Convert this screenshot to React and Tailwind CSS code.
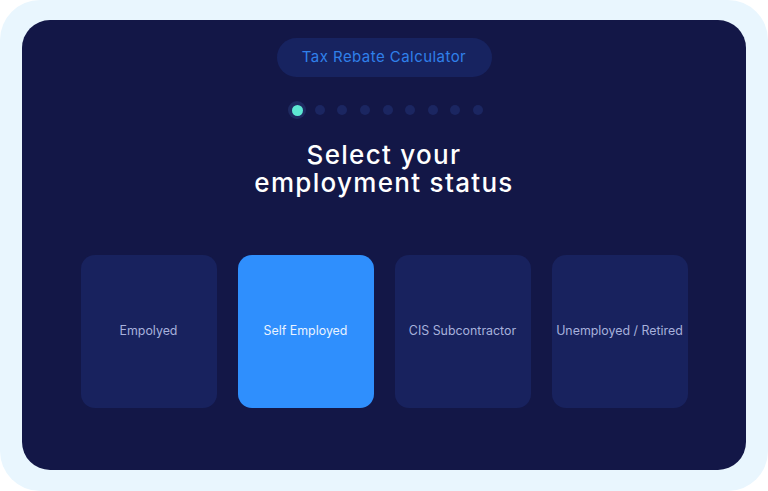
import React from "react";

const options = ["Empolyed", "Self Employed", "CIS Subcontractor", "Unemployed / Retired"];

export default function App() {
  return (
    <div className="w-[768px] h-[491px] bg-white" style={{ fontFamily: "Inter, 'Noto Sans', sans-serif" }}>
      <div className="w-full h-full rounded-[40px] bg-[#e9f6fe] pt-[20px] pl-[22px] pr-[22px] pb-[21px]">
        <div className="w-full h-full rounded-[28px] bg-[#131747] flex flex-col items-center pt-[18px]">
          <div className="w-[215px] h-[39px] rounded-full bg-[#172360] flex items-center justify-center text-[15px] text-[#3080ea] tracking-[0.45px]">
            Tax Rebate Calculator
          </div>
          <div className="mt-[24px] ml-[7px] flex items-center gap-[12.6px] h-[18px]">
            <div className="w-[18px] h-[18px] rounded-full bg-[#1e2a60] flex items-center justify-center -mx-[4px]">
              <div className="w-[11px] h-[11px] rounded-full bg-[#5de8d3]" />
            </div>
            {Array.from({ length: 8 }).map((_, i) => (
              <div key={i} className="w-[10px] h-[10px] rounded-full bg-[#1b2661]" />
            ))}
          </div>
          <h1 className="mt-[22px] text-center text-white text-[26px] leading-[28px] font-medium tracking-[1.3px]">
            Select your
            <br />
            employment status
          </h1>
          <div className="mt-[58px] flex gap-[21px]">
            {options.map((o, i) => (
              <div
                key={o}
                className={
                  i === 1
                    ? "w-[136px] h-[153px] rounded-[14px] bg-[#2f8ffd] flex items-center justify-center text-[12.4px] text-[#eaf3ff]"
                    : "w-[136px] h-[153px] rounded-[14px] bg-[#18225e] flex items-center justify-center text-[12.4px] text-[#a7b1dc]"
                }
              >
                {o}
              </div>
            ))}
          </div>
        </div>
      </div>
    </div>
  );
}
